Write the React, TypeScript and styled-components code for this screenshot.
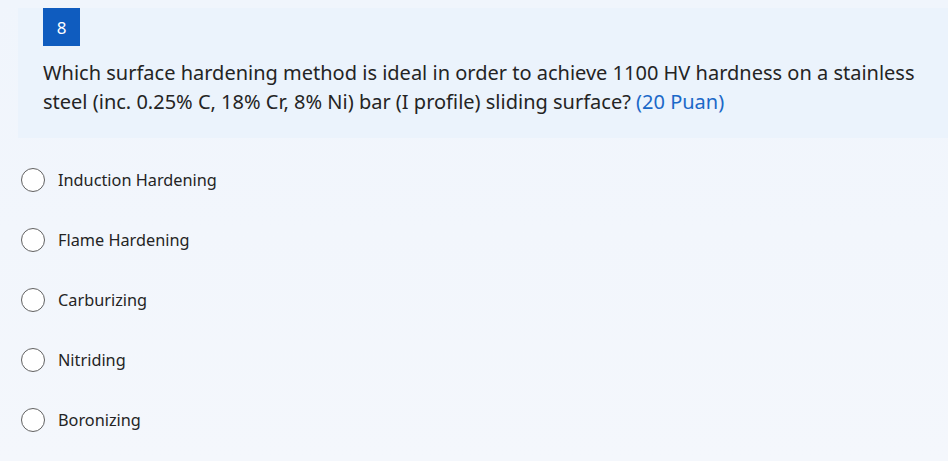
import React from "react";
import styled, { createGlobalStyle } from "styled-components";

const Global = createGlobalStyle`
  html, body { margin: 0; padding: 0; }
  body {
    background: linear-gradient(180deg, #f0f5fc 0%, #f4f7fc 100%);
    font-family: "Noto Sans", "Open Sans", sans-serif;
    width: 948px;
    height: 461px;
    overflow: hidden;
  }
`;

const Page = styled.div`
  padding: 8px 0 0 18px;
`;

const Card = styled.div`
  background: #ebf3fc;
  padding: 0 0 0 25px;
  height: 130px;
  box-sizing: border-box;
`;

const Badge = styled.div`
  width: 37px;
  height: 38px;
  background: #0f5cbf;
  color: #fff;
  display: flex;
  align-items: center;
  justify-content: center;
  font-size: 17px;
`;

const Question = styled.div`
  margin-top: 12px;
  font-size: 20px;
  line-height: 29px;
  color: #242424;
  white-space: nowrap;
`;

const Points = styled.span`
  color: #1a68c8;
`;

const Options = styled.div`
  display: flex;
  flex-direction: column;
  padding: 30px 0 0 21px;
  gap: 36px;
`;

const Option = styled.label`
  display: flex;
  align-items: center;
  gap: 13px;
  height: 24px;
  font-size: 16.3px;
  color: #242424;
`;

const Radio = styled.span`
  width: 22px;
  height: 22px;
  border-radius: 50%;
  border: 1px solid #616161;
  background: #fff;
  flex: none;
`;

const items = [
  "Induction Hardening",
  "Flame Hardening",
  "Carburizing",
  "Nitriding",
  "Boronizing",
];

export default function App() {
  return (
    <>
      <Global />
      <Page>
        <Card>
          <Badge>8</Badge>
          <Question>
            Which surface hardening method is ideal in order to achieve 1100 HV hardness on a stainless
            <br />
            steel (inc. 0.25% C, 18% Cr, 8% Ni) bar (I profile) sliding surface? <Points>(20 Puan)</Points>
          </Question>
        </Card>
      </Page>
      <Options>
        {items.map((t) => (
          <Option key={t}>
            <Radio />
            {t}
          </Option>
        ))}
      </Options>
    </>
  );
}
